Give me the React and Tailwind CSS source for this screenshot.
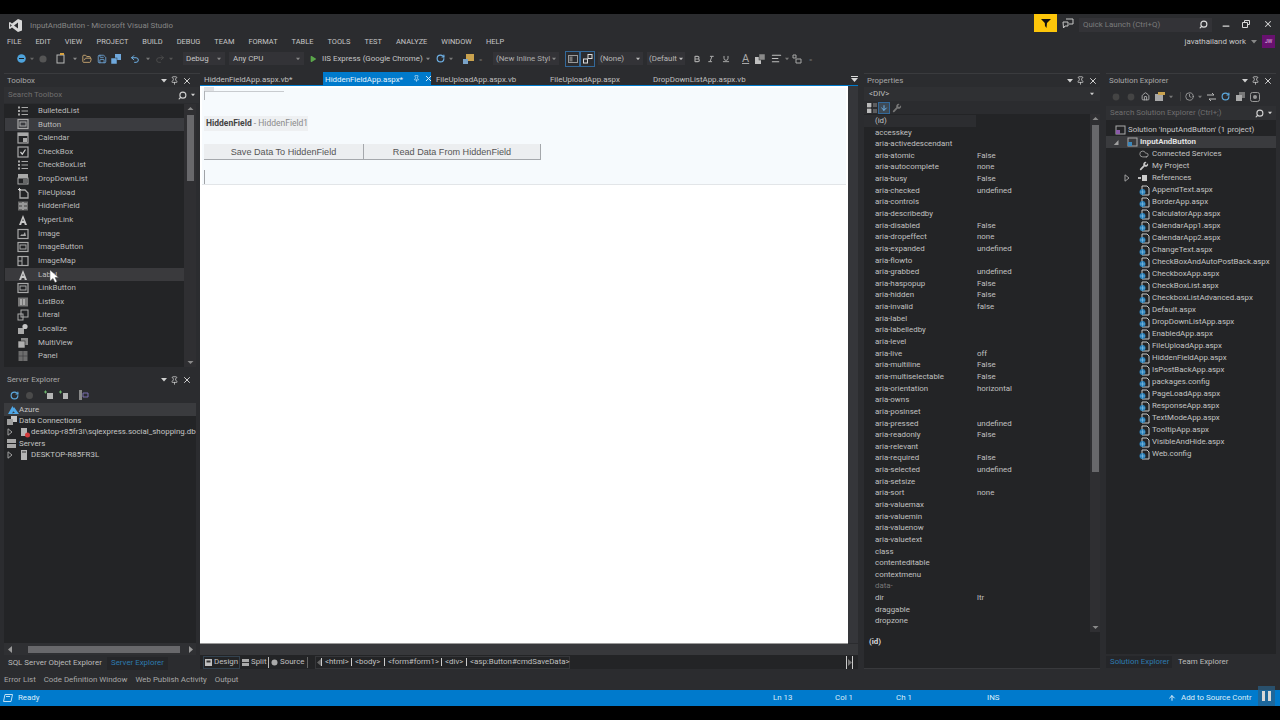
import React from "react";
import { Search, Minus, X, Pin, RotateCw, Undo2, Redo2, Save, Play, Wrench, Home, Clock, Bold, Italic, Underline, AlignLeft, ArrowUp, FolderOpen, Cloud } from "lucide-react";

const Caret = ({ className = "" }) => (
  <svg width="6" height="4" viewBox="0 0 6 4" className={`shrink-0 ${className}`}><path d="M0 0h6L3 3.5z" fill="currentColor" /></svg>
);
const Tri = ({ dir = "right" }) => (
  <svg width="6" height="8" viewBox="0 0 6 8" className="shrink-0 text-[#a0a0a0]">
    {dir === "right" ? <path d="M1 .8 5 4 1 7.2z" fill="none" stroke="currentColor" /> : <path d="M5.5 2v5H.8z" fill="currentColor" />}
  </svg>
);
const PinX = () => (
  <div className="flex items-center gap-[3px] text-[#d0d0d0]">
    <Caret />
    <Pin size={9} strokeWidth={2} />
    <X size={10} strokeWidth={2.4} />
  </div>
);

const ToolIcon = ({ kind }) => {
  const s = "#a9a9a9";
  const body = {
    list: <><rect x="1" y="1.5" width="2" height="2" fill={s}/><rect x="1" y="5" width="2" height="2" fill={s}/><rect x="1" y="8.5" width="2" height="2" fill={s}/><path d="M4.5 2.5H11M4.5 6H11M4.5 9.5H11" stroke={s}/></>,
    button: <><rect x="1" y="1.5" width="10" height="9" fill="none" stroke={s} strokeWidth="1.2"/><rect x="3" y="4" width="6" height="4" fill="none" stroke={s}/></>,
    cal: <><rect x="1" y="1" width="10" height="10" fill="none" stroke={s} strokeWidth="1.2"/><rect x="1" y="1" width="10" height="3" fill={s}/><rect x="6" y="6" width="4" height="4" fill={s}/></>,
    check: <><rect x="1" y="1" width="10" height="10" fill="none" stroke={s} strokeWidth="1.2"/><path d="M3.5 6 5.3 8.2 8.5 3.5" stroke="#d0d0d0" fill="none" strokeWidth="1.2"/></>,
    drop: <><rect x="1" y="1" width="10" height="4" fill={s}/><rect x="1" y="5" width="10" height="6" fill="none" stroke={s}/><path d="M6 7h4M6 9h4" stroke={s}/></>,
    file: <><path d="M3 3h5l3 3v5H3z" fill="none" stroke={s} strokeWidth="1.3"/><path d="M1 2.5h3M2.5 1v3" stroke="#d0d0d0"/></>,
    grid: <><rect x="1" y="1.5" width="10" height="9" fill="#6b6b6b"/><path d="M2 4h3M7 4h3M2 8h3M7 8h3M6 2v8" stroke="#c5c5c5"/></>,
    a: <path d="M6 1 2 11h2.2l.6-2h2.4l.6 2H10zM5.4 7 6 4.5 6.6 7z" fill="#c9c9c9"/>,
    image: <><rect x="1" y="1.5" width="10" height="9" fill="none" stroke={s} strokeWidth="1.2"/><path d="M3 8l2-2 1 1 2-3 1 4z" fill={s}/></>,
    map: <><rect x="1" y="1.5" width="10" height="9" fill="none" stroke={s} strokeWidth="1.2"/><path d="M5 2v8M1 6h4" stroke={s}/></>,
    box: <><rect x="1" y="1.5" width="10" height="9" fill="#777"/><path d="M3 4h2M3 6h2M3 8h2M7 3v6" stroke="#ddd"/></>,
    copy: <><rect x="4" y="1" width="7" height="7" fill="none" stroke={s}/><rect x="1" y="5" width="5" height="6" fill="none" stroke={s}/></>,
    loc: <><rect x="1" y="5" width="6" height="6" fill={s}/><circle cx="8" cy="3.5" r="2.6" fill="#c5c5c5"/></>,
    multi: <><rect x="4" y="1" width="7" height="7" fill="#8a8a8a"/><rect x="1" y="4" width="7" height="7" fill="#b0b0b0" stroke="#252526" strokeWidth=".6"/></>,
    panel: <><rect x="1.5" y="1" width="9" height="10" fill="#6d6d6d"/><path d="M6 1v10M1.5 6h9" stroke="#2d2d30" strokeWidth=".5"/></>,
  }[kind];
  return <svg width="12" height="12" viewBox="0 0 12 12" className="shrink-0">{body}</svg>;
};

const toolbox = [
  ["BulletedList", "list"], ["Button", "button"], ["Calendar", "cal"], ["CheckBox", "check"], ["CheckBoxList", "list"],
  ["DropDownList", "drop"], ["FileUpload", "file"], ["HiddenField", "grid"], ["HyperLink", "a"], ["Image", "image"],
  ["ImageButton", "button"], ["ImageMap", "map"], ["Label", "a"], ["LinkButton", "button"], ["ListBox", "box"],
  ["Literal", "copy"], ["Localize", "loc"], ["MultiView", "multi"], ["Panel", "panel"],
];

const props = [
  ["(id)"], ["accesskey"], ["aria-activedescendant"], ["aria-atomic", "False"], ["aria-autocomplete", "none"], ["aria-busy", "False"],
  ["aria-checked", "undefined"], ["aria-controls"], ["aria-describedby"], ["aria-disabled", "False"], ["aria-dropeffect", "none"],
  ["aria-expanded", "undefined"], ["aria-flowto"], ["aria-grabbed", "undefined"], ["aria-haspopup", "False"], ["aria-hidden", "False"],
  ["aria-invalid", "false"], ["aria-label"], ["aria-labelledby"], ["aria-level"], ["aria-live", "off"], ["aria-multiline", "False"],
  ["aria-multiselectable", "False"], ["aria-orientation", "horizontal"], ["aria-owns"], ["aria-posinset"], ["aria-pressed", "undefined"],
  ["aria-readonly", "False"], ["aria-relevant"], ["aria-required", "False"], ["aria-selected", "undefined"], ["aria-setsize"],
  ["aria-sort", "none"], ["aria-valuemax"], ["aria-valuemin"], ["aria-valuenow"], ["aria-valuetext"], ["class"], ["contenteditable"],
  ["contextmenu"], ["data-"], ["dir", "ltr"], ["draggable"], ["dropzone"],
];

const files = ["AppendText.aspx", "BorderApp.aspx", "CalculatorApp.aspx", "CalendarApp1.aspx", "CalendarApp2.aspx", "ChangeText.aspx",
  "CheckBoxAndAutoPostBack.aspx", "CheckboxApp.aspx", "CheckBoxList.aspx", "CheckboxListAdvanced.aspx", "Default.aspx", "DropDownListApp.aspx",
  "EnabledApp.aspx", "FileUploadApp.aspx", "HiddenFieldApp.aspx", "IsPostBackApp.aspx", "packages.config", "PageLoadApp.aspx", "ResponseApp.aspx",
  "TextModeApp.aspx", "TooltipApp.aspx", "VisibleAndHide.aspx", "Web.config"];

const FileIcon = () => (
  <svg width="11" height="11" viewBox="0 0 11 11" className="shrink-0">
    <path d="M3 1h5l2 2v7H3z" fill="none" stroke="#c8c8c8" />
    <circle cx="3.5" cy="7" r="3" fill="#2a7fb8" />
    <path d="M1 7h5M3.5 4.5v5" stroke="#9fd0ee" strokeWidth=".5" />
  </svg>
);

const ScrollV = ({ thumb, className = "" }) => (
  <div className={`w-[10px] shrink-0 flex flex-col items-center bg-[#2f2f32] text-[#8a8a8a] ${className}`}>
    <svg width="7" height="5" viewBox="0 0 7 5" className="mt-[2px] shrink-0"><path d="M3.5 1 6.5 4H.5z" fill="currentColor" /></svg>
    <div className={`w-[7px] mt-[4px] bg-[#68686b] ${thumb}`} />
    <div className="flex-1" />
    <svg width="7" height="5" viewBox="0 0 7 5" className="mb-[2px] shrink-0"><path d="M3.5 4 6.5 1H.5z" fill="currentColor" /></svg>
  </div>
);

const Menu = ["FILE", "EDIT", "VIEW", "PROJECT", "BUILD", "DEBUG", "TEAM", "FORMAT", "TABLE", "TOOLS", "TEST", "ANALYZE", "WINDOW", "HELP"];

export default function App() {
  return (
    <div className="w-[1280px] h-[720px] bg-black flex flex-col overflow-hidden relative font-['Roboto',sans-serif] text-[7.9px] leading-none text-[#c4c4c4]">
      <div className="h-[14px] shrink-0" />
      <div className="flex-1 min-h-0 bg-[#2b2c2f] flex flex-col">
        {/* title */}
        <div className="h-[20px] shrink-0 flex items-center">
          <svg width="15" height="15" viewBox="0 0 15 15" className="ml-[8px] shrink-0 mt-[3px]">
            <path d="M10 1l4 1.5v10L10 14 4 9.5l-2 1.5-1-.6V4.6L2 4l2 1.5z" fill="#d8d8d8" />
            <path d="M10 4.5v6L6 7.5z M2.2 6v3l1.6-1.5z" fill="#2b2c2f" />
          </svg>
          <span className="ml-[7px] mt-[4px] text-[#868686]">InputAndButton - Microsoft Visual Studio</span>
          <div className="flex-1" />
          <div className="w-[23px] h-[18px] self-start bg-[#fdc60a] flex items-center justify-center">
            <svg width="10" height="10" viewBox="0 0 10 10"><path d="M0 1h10L6 5l-.5 5L4 8 3.8 5z" fill="#111" /></svg>
          </div>
          <svg width="12" height="12" viewBox="0 0 12 12" className="ml-[5px] -mt-[1px] text-[#c8c8c8]"><path d="M4 1h7v5H7M1 4h5v4H3L1.5 10z" fill="none" stroke="currentColor" /></svg>
          <div className="ml-[5px] mt-[1px] w-[133px] h-[14px] bg-[#333337] flex items-center justify-between px-[4px] text-[#7c7c7c]">
            <span>Quick Launch (Ctrl+Q)</span>
            <Search size={9} strokeWidth={3} className="text-[#dcdcdc] -scale-x-100" />
          </div>
          <Minus size={10} strokeWidth={3} className="ml-[9px] text-[#d8d8d8] mt-[4px]" />
          <svg width="8" height="8" viewBox="0 0 8 8" className="ml-[11px] text-[#d8d8d8]"><path d="M2.5 2.5V.5h5v4h-2M.5 2.5h5v5h-5z" fill="none" stroke="currentColor" /></svg>
          <X size={10} strokeWidth={2.5} className="ml-[13px] mr-[7px] text-[#d8d8d8]" />
        </div>
        {/* menu */}
        <div className="h-[16px] shrink-0 flex items-center pl-[7px] gap-[14px] text-[#c6c6c6] text-[7.45px]">
          {Menu.map((m) => <span key={m}>{m}</span>)}
          <div className="flex-1 flex items-center justify-end pr-[5px] gap-[5px] -mt-[1px] text-[7.9px]">
            <span className="text-[#c8c8c8]">javathailand work</span>
            <Caret className="text-[#888]" />
            <div className="w-[13px] h-[13px] bg-[#68116f] flex items-center justify-center text-[5px] text-[#e5c5e8]">JW</div>
          </div>
        </div>
        {/* toolbar */}
        <div className="h-[17px] shrink-0 flex items-center text-[#bdbdbd] whitespace-nowrap">
          <svg width="9" height="9" viewBox="0 0 9 9" className="ml-[17px] shrink-0"><circle cx="4.5" cy="4.5" r="4.3" fill="#4ea3dc" /><path d="M2 4.5h5" stroke="#1e1e1e" /></svg>
          <Caret className="ml-[3px] text-[#666] scale-75" />
          <svg width="8" height="8" viewBox="0 0 8 8" className="ml-[4px] shrink-0"><circle cx="4" cy="4" r="3.6" fill="#555" /></svg>
          <svg width="10" height="11" viewBox="0 0 10 11" className="ml-[9px] shrink-0"><rect x="1" y="2" width="7" height="8" fill="none" stroke="#b8b8b8" /><path d="M4 0h4v2H4z" fill="#d9a441" /></svg>
          <Caret className="ml-[6px] text-[#888] scale-75" />
          <FolderOpen size={10} className="ml-[4px] shrink-0 text-[#dcb67a]" />
          <Save size={10} className="ml-[5px] shrink-0 text-[#6fa8dc]" />
          <svg width="11" height="10" viewBox="0 0 11 10" className="ml-[4px] shrink-0"><rect x="4" y="0" width="6" height="6" fill="#6fa8dc" /><rect x="0" y="4" width="6" height="6" fill="#6fa8dc" stroke="#2b2c2f" strokeWidth=".5" /></svg>
          <Undo2 size={10} strokeWidth={2.4} className="ml-[8px] shrink-0 text-[#6fb2e8]" />
          <Caret className="ml-[5px] text-[#777] scale-75" />
          <Redo2 size={10} className="ml-[4px] shrink-0 text-[#505050]" />
          <Caret className="ml-[3px] text-[#555] scale-75" />
          <div className="ml-[9px] w-[42px] h-[13px] shrink-0 bg-[#333337] flex items-center pl-[3px] justify-between pr-[3px] text-[#c6c6c6]">Debug<Caret className="text-[#888] scale-75" /></div>
          <div className="ml-[4px] w-[75px] h-[13px] shrink-0 bg-[#333337] flex items-center pl-[4px] justify-between pr-[3px] text-[#c6c6c6]">Any CPU<Caret className="text-[#888] scale-75" /></div>
          <Play size={8} fill="#5aa54a" strokeWidth={0} className="ml-[5px] shrink-0" />
          <span className="ml-[5px] w-[100px] shrink-0 text-[#c6c6c6]">IIS Express (Google Chrome)</span>
          <Caret className="ml-[3px] text-[#888] scale-75" />
          <RotateCw size={9} strokeWidth={3} className="ml-[5px] shrink-0 text-[#6fb2e8]" />
          <Caret className="ml-[3px] text-[#777] scale-75" />
          <svg width="11" height="10" viewBox="0 0 11 10" className="ml-[9px] shrink-0"><rect x="3" y="0" width="8" height="7" fill="#c9a24e" /><path d="M0 5h5v5H0z" fill="#7aa3c8" /></svg>
          <span className="ml-[5px] w-[4px] shrink-0 text-[#777] text-[6px] mt-[3px]">=</span>
          <div className="ml-[10px] w-[66px] h-[13px] shrink-0 bg-[#333337] flex items-center justify-between pl-[3px] pr-[2px] overflow-hidden text-[#aeaeae]">(New Inline Styl<Caret className="text-[#888] scale-75" /></div>
          <div className="ml-[6px] w-[15px] h-[16px] shrink-0 border border-[#33699a] flex items-center justify-center">
            <svg width="10" height="8" viewBox="0 0 10 8"><rect x=".5" y=".5" width="9" height="7" fill="none" stroke="#9a9a9a" /><rect x="1.5" y="1.5" width="3" height="5" fill="#777" /></svg>
          </div>
          <div className="w-[15px] h-[16px] shrink-0 border border-[#33699a] flex items-center justify-center">
            <svg width="10" height="10" viewBox="0 0 10 10"><rect x=".5" y="5" width="4" height="4" fill="none" stroke="#ddd" /><rect x="5" y=".5" width="4" height="4" fill="none" stroke="#ddd" /><path d="M4 6l2-2" stroke="#ddd" /></svg>
          </div>
          <div className="ml-[3px] w-[45px] h-[13px] shrink-0 bg-[#333337] flex items-center justify-between pl-[2px] pr-[2px] text-[#b8b8b8]">(None)<Caret className="text-[#bbb] scale-75" /></div>
          <div className="ml-[4px] w-[38px] h-[13px] shrink-0 bg-[#333337] flex items-center justify-between pl-[2px] pr-[1px] text-[#b8b8b8]">(Default<Caret className="text-[#bbb] scale-75" /></div>
          <Bold size={8} strokeWidth={3.5} className="ml-[8px] shrink-0 text-[#a8a8a8]" />
          <Italic size={8} strokeWidth={3} className="ml-[6px] shrink-0 text-[#a8a8a8]" />
          <Underline size={8} strokeWidth={3} className="ml-[7px] shrink-0 text-[#a8a8a8]" />
          <span className="ml-[12px] w-[8px] shrink-0 text-[11px] text-[#a8a8a8] underline">A</span>
          <svg width="10" height="10" viewBox="0 0 10 10" className="ml-[5px] shrink-0"><rect x="0" y="3" width="6" height="7" fill="#c0c0c0" /><rect x="4" y="0" width="6" height="6" fill="#8a8a8a" stroke="#2b2c2f" strokeWidth=".5" /></svg>
          <AlignLeft size={11} strokeWidth={2.4} className="ml-[6px] shrink-0 text-[#c0c0c0]" />
          <Caret className="ml-[2px] text-[#777] scale-75" />
          <svg width="10" height="10" viewBox="0 0 10 10" className="ml-[2px] shrink-0"><path d="M1 1h3v3H1zM4 5h5v4H4z" fill="none" stroke="#a8a8a8" /></svg>
          <span className="ml-[7px] text-[#777] text-[6px] mt-[3px]">=</span>
        </div>
        <div className="h-[6px] shrink-0" />

        {/* body */}
        <div className="flex-1 min-h-0 flex">
          {/* Left */}
          <div className="w-[200px] shrink-0 flex flex-col pl-[4px]">
            <div className="h-[14px] shrink-0 flex items-center justify-between pl-[3px] pr-[8px] text-[#a8a8a8] border-t border-[#3a3b3e]">
              <span>Toolbox</span><PinX />
            </div>
            <div className="h-[16px] shrink-0 flex items-center justify-between px-[4px] pr-[3px] bg-[#2f3033] text-[#6f6f6f] mr-[1px]">
              <span>Search Toolbox</span>
              <div className="flex items-center gap-[3px] text-[#cfcfcf]">
                <Search size={9} strokeWidth={3} className="-scale-x-100" />
                <Caret className="scale-75" />
              </div>
            </div>
            <div className="h-[263px] shrink-0 flex mr-[4px] overflow-hidden mt-[1px]">
              <div className="flex-1 bg-[#232426] overflow-hidden pl-[1px]">
                {toolbox.map(([t, k]) => (
                  <div key={t} className={`h-[13.65px] flex items-center pl-[12px] ${t === "Button" ? "bg-[#3b3c40]" : t === "Label" ? "bg-[#3a3a3d]" : ""}`}>
                    <ToolIcon kind={k} />
                    <span className="ml-[9px] text-[#bcbcbc]">{t}</span>
                  </div>
                ))}
              </div>
              <ScrollV thumb="h-[66px]" className="w-[12px]" />
            </div>
            <div className="h-[6px] shrink-0" />
            <div className="h-[14px] shrink-0 flex items-center justify-between pl-[3px] pr-[8px] text-[#a8a8a8]">
              <span>Server Explorer</span><PinX />
            </div>
            <div className="h-[16px] shrink-0 flex items-center pl-[6px] text-[#888]">
              <RotateCw size={9} strokeWidth={3} className="text-[#5da9de]" />
              <svg width="9" height="9" viewBox="0 0 9 9" className="ml-[6px]"><circle cx="4.5" cy="4.5" r="3.5" fill="#4a4a4a" /></svg>
              <svg width="10" height="10" viewBox="0 0 10 10" className="ml-[10px]"><rect x="3" y="3" width="6" height="6" fill="#b5b5b5" /><path d="M0 2h3M1.5 .5v3" stroke="#6bb36b" /></svg>
              <svg width="10" height="10" viewBox="0 0 10 10" className="ml-[5px]"><rect x="4" y="3" width="5" height="6" fill="#b5b5b5" /><path d="M0 2h3M1.5 .5v3" stroke="#6bb36b" /></svg>
              <svg width="10" height="10" viewBox="0 0 10 10" className="ml-[10px]"><rect x="0" y="0" width="3" height="10" fill="#888" /><path d="M4 3h5v4H4z" fill="none" stroke="#7b6fb0" /></svg>
            </div>
            <div className="flex-1 min-h-0 bg-[#232426] flex flex-col overflow-hidden mr-[4px]">
              <div className="pt-[1px] h-[12.5px] shrink-0 bg-[#3a3b3e] flex items-center pl-[4px]">
                <svg width="11" height="8" viewBox="0 0 11 8"><path d="M4.5 0 0 8h4l2-5zM6 1 4.5 5 7 6.5 3 8h8z" fill="#4fa8e8" /></svg>
                <span>Azure</span>
              </div>
              <div className="h-[11.3px] shrink-0 flex items-center pl-[3px] gap-[1px] whitespace-nowrap">
                <svg width="11" height="10" viewBox="0 0 11 10"><rect x="4" y="0" width="6" height="6" fill="#c5c5c5" /><rect x="0" y="3" width="6" height="6" fill="#a0a0a0" /></svg>
                <span>Data Connections</span>
              </div>
              <div className="h-[11.3px] shrink-0 flex items-center pl-[3px] whitespace-nowrap overflow-hidden">
                <Tri />
                <svg width="10" height="11" viewBox="0 0 10 11" className="ml-[7px] shrink-0"><rect x="1" y="1" width="6" height="8" fill="#b5b5b5" /><circle cx="7.5" cy="8" r="2.5" fill="#d23c3c" /></svg>
                <span className="ml-[1px]">desktop-r85fr3l\sqlexpress.social_shopping.dbo</span>
              </div>
              <div className="h-[11.3px] shrink-0 flex items-center pl-[3px] gap-[3px]">
                <svg width="9" height="9" viewBox="0 0 9 9"><rect x="0" y="0" width="9" height="4" fill="#a8a8a8" /><rect x="0" y="5" width="9" height="4" fill="#a8a8a8" /></svg>
                <span>Servers</span>
              </div>
              <div className="h-[11.3px] shrink-0 flex items-center pl-[3px]">
                <Tri />
                <svg width="6" height="10" viewBox="0 0 6 10" className="ml-[8px]"><rect x="0" y="0" width="6" height="10" fill="#b5b5b5" /><path d="M1 2h4" stroke="#333" /></svg>
                <span className="ml-[4px]">DESKTOP-R85FR3L</span>
              </div>
              <div className="flex-1" />
              <div className="h-[12px] shrink-0 bg-[#2f3033] flex items-center pl-[4px] pr-[3px] text-[#999]">
                <svg width="5" height="7" viewBox="0 0 5 7"><path d="M4 0v7L0 3.5z" fill="currentColor" /></svg>
                <div className="ml-[15px] w-[152px] h-[7px] bg-[#68686b]" />
                <div className="flex-1" />
                <svg width="5" height="7" viewBox="0 0 5 7"><path d="M1 0v7l4-3.5z" fill="currentColor" /></svg>
              </div>
            </div>
            <div className="h-[14px] shrink-0 flex items-center pl-[4px] pt-[2px] whitespace-nowrap">
              <span className="text-[#bcbcbc] w-[99px] shrink-0">SQL Server Object Explorer</span>
              <span className="h-[13px] px-[4px] flex items-center bg-[#252629] text-[#2d7bb0]">Server Explorer</span>
            </div>
          </div>

          {/* Center */}
          <div className="w-[658px] shrink-0 flex flex-col">
            <div className="h-[13px] -mt-[1px] pt-[2px] shrink-0 flex items-center whitespace-nowrap text-[#c0c0c0]">
              <span className="ml-[4px] w-[119px] shrink-0">HiddenFieldApp.aspx.vb*</span>
              <div className="w-[108px] h-[13px] -mt-[2px] shrink-0 bg-[#007acc] flex items-center pl-[2px] text-[#e6f2fa]">
                <span className="w-[88px] shrink-0 pt-[2px]">HiddenFieldApp.aspx*</span>
                <Pin size={7} className="shrink-0" />
                <X size={9} strokeWidth={2.5} className="ml-[4px] shrink-0" />
              </div>
              <span className="ml-[5px] w-[114px] shrink-0">FileUploadApp.aspx.vb</span>
              <span className="w-[103px] shrink-0">FileUploadApp.aspx</span>
              <span className="w-[198px] shrink-0">DropDownListApp.aspx.vb</span>
              <svg width="7" height="7" viewBox="0 0 7 7" className="shrink-0 text-[#d8d8d8]"><path d="M0 0h7v1H0zM0 2h7L3.5 6z" fill="currentColor" /></svg>
            </div>
            <div className="h-[1px] shrink-0 bg-[#007acc]" />
            <div className="h-[557px] shrink-0 flex">
              <div className="w-[648px] bg-white pt-[2px]">
                <div className="h-[97px] ml-[2px] mr-[2px] bg-[#f6fafd] border-b border-[#e2e5e8] relative">
                  <div className="absolute left-[2px] top-[3px] w-[80px] h-[1px] bg-[#c8cbcf]" />
                  <div className="absolute left-[2px] -top-[1px] w-[10px] h-[4px] bg-[#dfe1e4]" />
                  <div className="absolute left-[2px] top-[3px] w-[1px] h-[9px] bg-[#b0b3b7]" />
                  <div className="absolute left-[2px] bottom-0 w-[1px] h-[14px] bg-[#a0a3a7]" />
                  <div className="pt-[28px] pl-[2px]">
                    <div className="w-[104px] h-[15px] bg-[#eef0f2] flex items-center pl-[2px] text-[#8a8a8a] text-[8.5px] whitespace-nowrap">
                      <b className="text-[#444]">HiddenField</b>&nbsp;- HiddenField1
                    </div>
                    <div className="mt-[13px] flex h-[16px] font-['Liberation_Sans',sans-serif] text-[9.1px] text-[#555]">
                      <div className="w-[160px] pt-[2px] bg-[#eceef0] border-b border-r border-[#a5a8ac] flex items-center justify-center">Save Data To HiddenField</div>
                      <div className="w-[177px] pt-[2px] bg-[#eceef0] border-b border-r border-[#a5a8ac] flex items-center justify-center">Read Data From HiddenField</div>
                    </div>
                  </div>
                </div>
              </div>
              <div className="w-[10px] bg-[#35363a]" />
            </div>
            <div className="h-[1px] shrink-0 bg-[#9a9a9a] w-[648px]" />
            <div className="h-[11px] shrink-0 bg-[#37383b]" />
            <div className="h-[14px] shrink-0 flex items-center bg-[#232426] whitespace-nowrap text-[#c0c0c0] pl-[3px]">
              <div className="h-[13px] px-[1px] flex items-center gap-[2px] border border-[#33424f] w-[37px] shrink-0">
                <svg width="7" height="7" viewBox="0 0 7 7" className="shrink-0"><rect width="7" height="7" fill="#c0c0c0" /><rect x="1.5" y="1.5" width="4" height="2" fill="#333" /></svg>
                Design
              </div>
              <div className="flex items-center gap-[2px] pl-[2px] border-r border-[#bbb] h-[11px] w-[29px] shrink-0">
                <svg width="7" height="7" viewBox="0 0 7 7" className="shrink-0"><rect width="7" height="7" fill="#aaa" /><path d="M0 3.5h7" stroke="#333" /></svg>
                Split
              </div>
              <div className="flex items-center gap-[2px] pl-[2px] h-[11px] w-[38px] shrink-0">
                <svg width="7" height="7" viewBox="0 0 7 7" className="shrink-0"><circle cx="3.5" cy="3.5" r="3" fill="#aaa" /></svg>
                Source
              </div>
              <div className="w-[1px] h-[11px] bg-[#666] shrink-0" />
              <div className="ml-[7px] flex items-center h-[13px] border border-[#36373a] shrink-0">
                <span className="w-[5px] flex justify-center text-[#666]"><svg width="4" height="7" viewBox="0 0 4 7"><path d="M4 0v7L0 3.5z" fill="currentColor" /></svg></span>
                <span className="border-l border-[#ccc] w-[30px] pl-[3px] shrink-0">&lt;html&gt;</span>
                <span className="border-l border-[#ccc] w-[33px] pl-[3px] shrink-0">&lt;body&gt;</span>
                <span className="border-l border-[#ccc] w-[57px] pl-[3px] shrink-0">&lt;form#form1&gt;</span>
                <span className="border-l border-[#ccc] w-[25px] pl-[3px] shrink-0">&lt;div&gt;</span>
                <span className="border-l border-[#ccc] w-[103px] pl-[3px] shrink-0">&lt;asp:Button#cmdSaveData&gt;</span>
              </div>
              <div className="flex-1" />
              <div className="w-[7px] h-[13px] border-l border-[#ccc] border-r flex items-center justify-center mr-[5px] text-[#777]"><svg width="4" height="7" viewBox="0 0 4 7"><path d="M0 0v7l4-3.5z" fill="currentColor" /></svg></div>
            </div>
          </div>

          {/* Properties */}
          <div className="w-[236px] shrink-0 ml-[6px] flex flex-col">
            <div className="h-[14px] shrink-0 flex items-center justify-between pl-[3px] pr-[2px] text-[#a8a8a8] border-t border-[#3a3b3e]">
              <span>Properties</span><PinX />
            </div>
            <div className="h-[14px] shrink-0 flex items-center justify-between bg-[#2f3033] px-[5px] text-[#bcbcbc]">
              <span>&lt;DIV&gt;</span><Caret className="scale-75 text-[#ccc]" />
            </div>
            <div className="h-[13px] shrink-0 flex items-center pl-[3px] gap-[1px]">
              <svg width="10" height="10" viewBox="0 0 10 10"><path d="M0 0h4v4H0zM0 6h4v4H0zM6 1h4M6 3h4M6 7h4M6 9h4" fill="#bbb" stroke="#bbb" strokeWidth=".7" /></svg>
              <div className="w-[12px] h-[12px] bg-[#3e4a55] border border-[#33699a] flex items-center justify-center"><ArrowUp size={8} strokeWidth={3} className="rotate-180 text-[#6fb2e8]" /></div>
              <Wrench size={10} fill="#777" strokeWidth={0} className="ml-[1px]" />
            </div>
            <div className="h-[518px] shrink-0 flex bg-[#232426] overflow-hidden">
              <div className="flex-1 overflow-hidden">
                <div className="h-[1px]" />
                {props.map(([n, v]) => (
                  <div key={n} className={`h-[11.65px] flex items-center pl-[11px] whitespace-nowrap ${n === "(id)" ? "w-[112px] bg-[#2c2d30]" : ""}`}>
                    <span className={`w-[102px] shrink-0 ${n === "data-" ? "text-[#777]" : "text-[#c0c0c0]"}`}>{n}</span>
                    {v && <span className="text-[#c0c0c0]">{v}</span>}
                  </div>
                ))}
              </div>
              <ScrollV thumb="h-[347px]" />
            </div>
            <div className="flex-1 bg-[#232426] pl-[5px] pt-[6px] font-bold text-[#d8d8d8] border-b border-[#38393c]">(id)</div>
          </div>

          {/* Solution */}
          <div className="w-[170px] shrink-0 min-w-0 ml-[6px] flex flex-col">
            <div className="h-[14px] shrink-0 flex items-center justify-between pl-[3px] pr-[3px] text-[#a8a8a8] border-t border-[#3a3b3e]">
              <span>Solution Explorer</span><PinX />
            </div>
            <div className="h-[19px] shrink-0 flex items-center pl-[6px] text-[#b0b0b0]">
              <svg width="8" height="8" viewBox="0 0 8 8"><circle cx="4" cy="4" r="3.4" fill="#444" /></svg>
              <svg width="8" height="8" viewBox="0 0 8 8" className="ml-[7px]"><circle cx="4" cy="4" r="3.4" fill="#444" /></svg>
              <Home size={9} strokeWidth={2.4} className="ml-[6px]" />
              <svg width="10" height="9" viewBox="0 0 10 9" className="ml-[5px]"><rect x="0" y="2" width="8" height="7" fill="#a8a8a8" /><rect x="3" y="0" width="7" height="3" fill="#c9a24e" /></svg>
              <Caret className="ml-[3px] scale-75 text-[#777]" />
              <div className="ml-[6px] w-[1px] h-[9px] bg-[#444]" />
              <Clock size={9} strokeWidth={2} className="ml-[4px]" />
              <Caret className="ml-[3px] scale-75 text-[#777]" />
              <svg width="9" height="8" viewBox="0 0 9 8" className="ml-[4px]"><path d="M0 2h7L5 0M9 6H2l2 2" fill="none" stroke="#bbb" /></svg>
              <RotateCw size={9} strokeWidth={3} className="ml-[5px] text-[#5da9de]" />
              <svg width="9" height="9" viewBox="0 0 9 9" className="ml-[6px]"><rect x="3" y="0" width="6" height="6" fill="#777" /><rect x="0" y="3" width="6" height="6" fill="#aaa" /></svg>
              <svg width="10" height="10" viewBox="0 0 10 10" className="ml-[5px]"><rect x=".5" y=".5" width="9" height="9" rx="2" fill="none" stroke="#999" /><circle cx="5" cy="5" r="2" fill="#999" /></svg>
            </div>
            <div className="h-[14px] shrink-0 flex items-center justify-between bg-[#2f3033] px-[4px] pr-[3px] text-[#6f6f6f]">
              <span>Search Solution Explorer (Ctrl+;)</span>
              <div className="flex items-center gap-[3px] text-[#cfcfcf]">
                <Search size={9} strokeWidth={3} className="-scale-x-100" />
                <Caret className="scale-75" />
              </div>
            </div>
            <div className="h-[534px] shrink-0 bg-[#232426] overflow-hidden pt-[4px] whitespace-nowrap">
              <div className="h-[12px] flex items-center pl-[9px] text-[#c8c8c8]">
                <svg width="11" height="10" viewBox="0 0 11 10"><rect x="1" y="1" width="9" height="8" fill="none" stroke="#aaa" /><rect x="1" y="5" width="4" height="4" fill="#8a5aa8" /></svg>
                <span className="ml-[2px]">Solution 'InputAndButton' (1 project)</span>
              </div>
              <div className="h-[12px] flex items-center pl-[7px] bg-[#3a3b3e]">
                <Tri dir="down" />
                <svg width="11" height="10" viewBox="0 0 11 10" className="ml-[8px]"><rect x="1" y="1" width="9" height="8" fill="none" stroke="#aaa" /><rect x="1" y="5" width="4" height="4" fill="#3c88bc" /></svg>
                <span className="ml-[2px] font-bold text-[#e0e0e0]">InputAndButton</span>
              </div>
              <div className="h-[12px] flex items-center pl-[33px]">
                <Cloud size={10} strokeWidth={2} className="text-[#a8a8a8]" />
                <span className="ml-[3px]">Connected Services</span>
              </div>
              <div className="h-[12px] flex items-center pl-[33px]">
                <Wrench size={10} fill="#c8c8c8" strokeWidth={0} />
                <span className="ml-[3px]">My Project</span>
              </div>
              <div className="h-[12px] flex items-center pl-[18px]">
                <Tri />
                <svg width="10" height="6" viewBox="0 0 10 6" className="ml-[8px]"><rect x="0" y="2" width="3" height="2" fill="#bbb" /><rect x="4" y="0" width="5" height="6" fill="#ccc" /></svg>
                <span className="ml-[4px]">References</span>
              </div>
              {files.map((f) => (
                <div key={f} className="h-[12px] flex items-center pl-[33px]">
                  <FileIcon />
                  <span className="ml-[2px]">{f}</span>
                </div>
              ))}
            </div>
            <div className="h-[14px] shrink-0 flex items-center pt-[2px] whitespace-nowrap">
              <span className="h-[12px] flex items-center pl-[4px] w-[66px] shrink-0 bg-[#252629] text-[#2d7bb0]">Solution Explorer</span>
              <span className="ml-[6px] text-[#bcbcbc]">Team Explorer</span>
            </div>
          </div>
        </div>

        {/* bottom tabs */}
        <div className="h-[21px] shrink-0 flex items-center pl-[4px] gap-[8px] text-[#a8a8a8] whitespace-nowrap">
          <span>Error List</span><span>Code Definition Window</span><span>Web Publish Activity</span><span>Output</span>
        </div>
        {/* status */}
        <div className="h-[16px] shrink-0 bg-[#007acc] flex items-center text-[#dceefa] whitespace-nowrap">
          <svg width="10" height="8" viewBox="0 0 10 8" className="ml-[3px] shrink-0"><path d="M2 .5h7.5L8 7.5H.5z" fill="none" stroke="#bfe0f5" /><path d="M3 2.5h4" stroke="#bfe0f5" /></svg>
          <span className="ml-[5px] w-[755px] shrink-0">Ready</span>
          <span className="w-[62px] shrink-0">Ln 13</span>
          <span className="w-[61px] shrink-0">Col 1</span>
          <span className="w-[91px] shrink-0">Ch 1</span>
          <span className="w-[181px] shrink-0">INS</span>
          <ArrowUp size={8} strokeWidth={3} className="shrink-0" />
          <span className="ml-[5px]">Add to Source Contr</span>
        </div>
      </div>
      <div className="h-[14px] shrink-0" />

      {/* overlays */}
      <svg width="10" height="14" viewBox="0 0 10 14" className="absolute left-[49px] top-[269px]"><path d="M1 1v11l3-2.5 2 4 2-1-2-4h3.5z" fill="#fff" stroke="#555" strokeWidth=".5" /></svg>
      <div className="absolute left-[1258px] top-[686px] w-[17px] h-[20px] bg-[#2a5f86]/70 flex items-center justify-center gap-[3px]">
        <div className="w-[3px] h-[10px] bg-[#d8d8d8]" />
        <div className="w-[3px] h-[10px] bg-[#d8d8d8]" />
      </div>
    </div>
  );
}
